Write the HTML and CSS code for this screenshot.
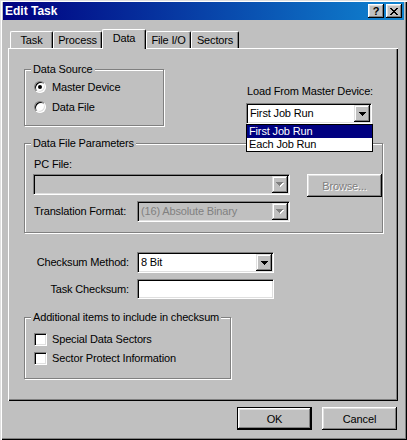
FILE: index.html
```html
<!DOCTYPE html>
<html>
<head>
<meta charset="utf-8">
<title>Edit Task</title>
<link rel="stylesheet" href="styles.css">
</head>
<body>
<div class="window">
  <div class="titlebar">
    <span class="title">Edit Task</span>
    <div class="tb-buttons">
      <span class="tb-btn help">?</span>
      <span class="tb-btn close">
        <svg width="8" height="7" viewBox="0 0 8 7"><path d="M0 0h2v1H0zM6 0h2v1H6zM1 1h2v1H1zM5 1h2v1H5zM2 2h4v1H2zM3 3h2v1H3zM2 4h4v1H2zM1 5h2v1H1zM5 5h2v1H5zM0 6h2v1H0zM6 6h2v1H6z" fill="#000"/></svg>
      </span>
    </div>
  </div>

  <div class="tabs">
    <div class="tab t-task">Task</div>
    <div class="tab t-process">Process</div>
    <div class="tab t-data active">Data</div>
    <div class="tab t-file">File I/O</div>
    <div class="tab t-sectors">Sectors</div>
  </div>

  <div class="panel">
    <div class="row-top">
      <div class="group g-source">
        <div class="group-title">Data Source</div>
        <div class="opt first"><span class="radio checked"></span><span>Master Device</span></div>
        <div class="opt"><span class="radio"></span><span>Data File</span></div>
      </div>
      <div class="load-col">
        <div class="load-label">Load From Master Device:</div>
        <div class="combo c-load">
          <span class="combo-text">First Job Run</span>
          <span class="combo-btn"><svg width="7" height="4" viewBox="0 0 7 4"><path d="M0 0h7v1H0zM1 1h5v1H1zM2 2h3v1H2zM3 3h1v1H3z" fill="#000"/></svg></span>
          <div class="dropdown">
            <div class="dd-item sel">First Job Run</div>
            <div class="dd-item">Each Job Run</div>
          </div>
        </div>
      </div>
    </div>

    <div class="group g-params">
      <div class="group-title">Data File Parameters</div>
      <div class="pc-label">PC File:</div>
      <div class="pc-row">
        <div class="combo disabled c-pc">
          <span class="combo-text"></span>
          <span class="combo-btn"><svg width="8" height="5" viewBox="0 0 8 5"><path d="M1 1h7v1H1zM2 2h5v1H2zM3 3h3v1H3zM4 4h1v1H4z" fill="#fff"/><path d="M0 0h7v1H0zM1 1h5v1H1zM2 2h3v1H2zM3 3h1v1H3z" fill="#808080"/></svg></span>
        </div>
        <div class="btn disabled b-browse">Browse...</div>
      </div>
      <div class="tf-row">
        <div class="tf-label">Translation Format:</div>
        <div class="combo disabled c-tf">
          <span class="combo-text">(16) Absolute Binary</span>
          <span class="combo-btn"><svg width="8" height="5" viewBox="0 0 8 5"><path d="M1 1h7v1H1zM2 2h5v1H2zM3 3h3v1H3zM4 4h1v1H4z" fill="#fff"/><path d="M0 0h7v1H0zM1 1h5v1H1zM2 2h3v1H2zM3 3h1v1H3z" fill="#808080"/></svg></span>
        </div>
      </div>
    </div>

    <div class="cs-row first">
      <div class="cs-label">Checksum Method:</div>
      <div class="combo c-cs">
        <span class="combo-text">8 Bit</span>
        <span class="combo-btn"><svg width="7" height="4" viewBox="0 0 7 4"><path d="M0 0h7v1H0zM1 1h5v1H1zM2 2h3v1H2zM3 3h1v1H3z" fill="#000"/></svg></span>
      </div>
    </div>
    <div class="cs-row second">
      <div class="cs-label">Task Checksum:</div>
      <div class="textbox"></div>
    </div>

    <div class="group g-extra">
      <div class="group-title">Additional items to include in checksum</div>
      <div class="opt first"><span class="check"></span><span>Special Data Sectors</span></div>
      <div class="opt second"><span class="check"></span><span>Sector Protect Information</span></div>
    </div>
  </div>

  <div class="button-row">
    <div class="btn default">OK</div>
    <div class="btn">Cancel</div>
  </div>
</div>
</body>
</html>
```

FILE: styles.css
```css
body {
  margin: 0;
  font-family: "Liberation Sans", Arial, sans-serif;
  font-size: 11px;
  letter-spacing: -0.15px;
  color: #000;
}

.window {
  width: 407px;
  height: 440px;
  box-sizing: border-box;
  padding: 2px 3px 3px 3px;
  background: #c0c0c0;
  box-shadow: inset 1px 1px #dfdfdf, inset 2px 2px #fff, inset -1px -1px #000, inset -2px -2px #808080;
}

/* title bar */
.titlebar {
  display: flex;
  align-items: center;
  justify-content: space-between;
  height: 18px;
  padding: 0 2px 0 2px;
  background: linear-gradient(90deg, #000080, #1084d0);
  color: #fff;
}
.title {
  font-weight: bold;
  font-size: 12px;
  letter-spacing: 0;
  line-height: 18px;
}
.tb-buttons {
  display: flex;
  gap: 2px;
}
.tb-btn {
  width: 16px;
  height: 14px;
  box-sizing: border-box;
  display: flex;
  align-items: center;
  justify-content: center;
  background: #c0c0c0;
  box-shadow: inset -1px -1px #000, inset 1px 1px #fff, inset -2px -2px #808080, inset 2px 2px #dfdfdf;
  color: #000;
  font-weight: bold;
  font-size: 11px;
  line-height: 14px;
}
.tb-btn svg { display: block; }

/* tabs */
.tabs {
  display: flex;
  align-items: flex-end;
  height: 19px;
  margin-top: 9px;
  padding-left: 7px;
}
.tab {
  height: 17px;
  box-sizing: border-box;
  display: flex;
  align-items: center;
  justify-content: center;
  background: #c0c0c0;
  border-top: 1px solid #fff;
  border-left: 1px solid #fff;
  border-right: 1px solid #000;
  border-top-left-radius: 2px;
  border-top-right-radius: 2px;
  box-shadow: inset -1px 0 #808080;
}
.t-task { width: 43px; }
.t-process { width: 49px; }
.t-data { width: 44px; }
.t-file { width: 45px; }
.t-sectors { width: 48px; }
.tab.active {
  height: 20px;
  margin-bottom: -1px;
  padding-bottom: 4px;
  position: relative;
  z-index: 2;
}

/* panel */
.panel {
  width: 390px;
  height: 353px;
  box-sizing: border-box;
  margin-left: 5px;
  padding: 21px 0 0 16px;
  box-shadow: inset 1px 1px #fff, inset -1px -1px #000, inset -2px -2px #808080;
}

.group {
  box-sizing: border-box;
  border: 1px solid #808080;
  box-shadow: inset 1px 1px #fff, 1px 1px #fff;
}
.group-title {
  width: fit-content;
  margin: -7px 0 0 6px;
  padding: 0 2px;
  line-height: 13px;
  background: #c0c0c0;
}

.row-top {
  display: flex;
  align-items: flex-start;
}
.g-source {
  width: 140px;
  height: 57px;
}
.opt {
  display: flex;
  align-items: center;
  height: 16px;
  margin-left: 9px;
  margin-top: 4px;
  line-height: 13px;
}
.opt.first { margin-top: 3px; }

.radio {
  width: 12px;
  height: 12px;
  box-sizing: border-box;
  margin-right: 6px;
  border-radius: 50%;
  border: 1px solid;
  border-color: #808080 #fff #fff #808080;
  background: #fff;
  box-shadow: inset 1px 1px 0 #000, inset -1px -1px 0 #dfdfdf;
  display: flex;
  align-items: center;
  justify-content: center;
}
.radio.checked::after {
  content: "";
  width: 4px;
  height: 4px;
  border-radius: 50%;
  background: #000;
}
.check {
  width: 13px;
  height: 13px;
  box-sizing: border-box;
  margin-right: 5px;
  border: 1px solid;
  border-color: #808080 #fff #fff #808080;
  background: #fff;
  box-shadow: inset 1px 1px 0 #000, inset -1px -1px 0 #dfdfdf;
}

.load-col {
  margin-left: 82px;
}
.load-label {
  margin-top: 16px;
  padding-left: 1px;
  line-height: 13px;
}

/* combo boxes */
.combo {
  position: relative;
  display: flex;
  height: 21px;
  box-sizing: border-box;
  border: 1px solid;
  border-color: #808080 #fff #fff #808080;
  box-shadow: inset 1px 1px 0 #000, inset -1px -1px 0 #dfdfdf;
  background: #fff;
  padding: 1px;
}
.combo.disabled { background: #c0c0c0; }
.combo-text {
  flex: 1;
  padding-left: 2px;
  line-height: 17px;
  white-space: nowrap;
  overflow: hidden;
}
.combo.disabled .combo-text { color: #808080; }
.combo-btn {
  width: 16px;
  height: 17px;
  box-sizing: border-box;
  display: flex;
  align-items: center;
  justify-content: center;
  background: #c0c0c0;
  box-shadow: inset -1px -1px #000, inset 1px 1px #dfdfdf, inset -2px -2px #808080, inset 2px 2px #fff;
}
.combo-btn svg { display: block; }
.c-load {
  width: 126px;
  margin-top: 5px;
}
.dropdown {
  position: absolute;
  left: -1px;
  top: 20px;
  width: 127px;
  box-sizing: border-box;
  border: 1px solid #000;
  background: #fff;
  z-index: 5;
}
.dd-item {
  height: 13px;
  line-height: 13px;
  padding-left: 2px;
}
.dd-item.sel {
  background: #000080;
  color: #fff;
}

/* data file params */
.g-params {
  width: 359px;
  height: 90px;
  margin-top: 17px;
}
.pc-label {
  margin: 8px 0 0 9px;
  line-height: 13px;
}
.pc-row {
  display: flex;
  align-items: flex-start;
  margin: 3px 0 0 8px;
}
.c-pc { width: 257px; }
.b-browse {
  width: 66px;
  height: 23px;
  margin-left: 17px;
}
.tf-row {
  display: flex;
  align-items: center;
  margin: 4px 0 0 9px;
}
.tf-label {
  width: 103px;
  line-height: 13px;
}
.c-tf { width: 153px; }

/* buttons */
.btn {
  width: 75px;
  height: 23px;
  box-sizing: border-box;
  display: flex;
  align-items: center;
  justify-content: center;
  background: #c0c0c0;
  box-shadow: inset -1px -1px #000, inset 1px 1px #fff, inset -2px -2px #808080, inset 2px 2px #dfdfdf;
}
.btn.disabled {
  color: #808080;
  text-shadow: 1px 1px 0 #fff;
}
.btn.default {
  border: 1px solid #000;
}

/* checksum */
.cs-row {
  display: flex;
  align-items: center;
}
.cs-row.first { margin-top: 19px; }
.cs-row.second { margin-top: 6px; }
.cs-label {
  width: 113px;
  box-sizing: border-box;
  padding-right: 8px;
  text-align: right;
  line-height: 13px;
}
.c-cs { width: 137px; }
.textbox {
  width: 137px;
  height: 20px;
  box-sizing: border-box;
  border: 1px solid;
  border-color: #808080 #fff #fff #808080;
  box-shadow: inset 1px 1px 0 #000, inset -1px -1px 0 #dfdfdf;
  background: #fff;
}

.g-extra {
  width: 207px;
  height: 62px;
  margin-top: 18px;
}
.g-extra .opt.first { margin-top: 7px; }
.g-extra .opt.second { margin-top: 3px; }

.button-row {
  display: flex;
  justify-content: flex-end;
  gap: 10px;
  margin-top: 6px;
  padding-right: 7px;
}
```
